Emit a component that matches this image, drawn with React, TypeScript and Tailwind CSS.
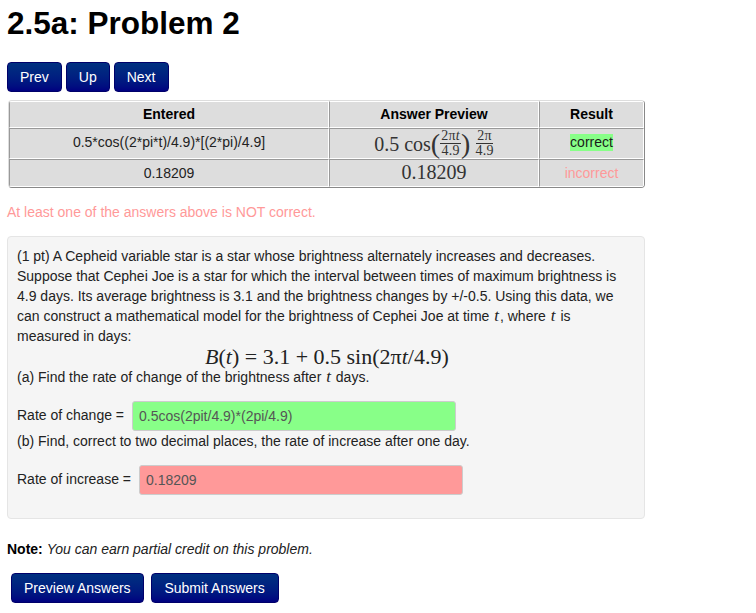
const sans = "font-['Liberation_Sans',Arial,sans-serif]";

function NavBtn({ label }: { label: string }) {
  return (
    <a className="flex h-[30px] items-center justify-center rounded-[4px] border border-[#00006a] bg-gradient-to-b from-[#003080] to-[#000080] px-3 text-[14px] text-white">
      {label}
    </a>
  );
}

function ActBtn({ label, wide }: { label: string; wide?: boolean }) {
  return (
    <button className={(wide ? "w-[128px] " : "px-3 ") + "flex h-[30px] items-center justify-center rounded-[4px] border border-[#00006a] bg-gradient-to-b from-[#003080] to-[#000080] text-[14px] text-white"}>
      {label}
    </button>
  );
}

function M({ children, className = "" }: { children: React.ReactNode; className?: string }) {
  return <span className={"font-['Liberation_Serif',serif] " + className}>{children}</span>;
}

function T() {
  return <M className="mx-[1px] inline-block h-[14px] align-baseline text-[17px] italic leading-[14px]">t</M>;
}

function Frac({ n, d }: { n: React.ReactNode; d: React.ReactNode }) {
  return (
    <span className="inline-flex flex-col items-center align-middle text-[14px] leading-[14px] tracking-[0.3px]">
      <span className="border-b border-[#333] px-[1px]">{n}</span>
      <span>{d}</span>
    </span>
  );
}

const th = "border-t border-l border-r border-b border-t-white border-l-[#999] border-r-white border-b-white bg-[#ddd] p-0 pb-[2px] text-center font-bold text-black";
const td = "border-t border-l border-r border-b border-t-[#999] border-l-[#999] border-r-white border-b-white bg-[#ddd] p-0 text-center";

export default function App() {
  return (
    <div className={sans + " h-[613px] w-[756px] overflow-hidden bg-white text-[14px] leading-[20px] text-[#222]"}>
      <h2 className="pl-[7px] pt-[6px] text-[31.5px] font-bold leading-[35px] text-black">2.5a: Problem 2</h2>
      <div className="ml-[7px] mt-[21px] flex gap-[4px]">
        <NavBtn label="Prev" />
        <NavBtn label="Up" />
        <NavBtn label="Next" />
      </div>
      <div className="ml-[8px] mt-[8px] w-[637px] overflow-hidden rounded-[4px] border border-b-[#888] border-l-[#ddd] border-r-[#888] border-t-[#ddd]">
        <table className="w-full table-fixed border-separate border-spacing-0">
          <colgroup>
            <col className="w-[320px]" />
            <col className="w-[210px]" />
            <col />
          </colgroup>
          <tbody>
            <tr className="h-[27px]">
              <th className={th}>Entered</th>
              <th className={th}>Answer Preview</th>
              <th className={th}>Result</th>
            </tr>
            <tr className="h-[31px]">
              <td className={td + " pb-[4px]"}>0.5*cos((2*pi*t)/4.9)*[(2*pi)/4.9]</td>
              <td className={td}>
                <M className="inline-flex h-[29px] items-center text-[20px] leading-[20px] text-[#333]">
                  0.5&nbsp;cos
                  <span className="text-[28px] font-light leading-[28px]">(</span>
                  <Frac n={<>2π<i>t</i></>} d="4.9" />
                  <span className="text-[28px] font-light leading-[28px]">)</span>
                  <span className="w-[5px]" />
                  <Frac n="2π" d="4.9" />
                </M>
              </td>
              <td className={td + " pb-[4px]"}>
                <span className="inline-block bg-[#8f8] leading-[17px] text-[#1a1a1a]">correct</span>
              </td>
            </tr>
            <tr className="h-[28px]">
              <td className={td}>0.18209</td>
              <td className={td}>
                <M className="text-[20px] leading-[20px] text-[#333]">0.18209</M>
              </td>
              <td className={td + " text-[#f99]"}>incorrect</td>
            </tr>
          </tbody>
        </table>
      </div>
      <p className="ml-[7px] mt-[14px] text-[#f99]">At least one of the answers above is NOT correct.</p>
      <div className="ml-[7px] mt-[14px] h-[283px] w-[638px] rounded-[4px] border border-[#e5e5e5] bg-[#f5f5f5] pl-[9px] pt-[9px]">
        <p className="w-[610px]">
          (1 pt) A Cepheid variable star is a star whose brightness alternately increases and decreases. Suppose that Cephei Joe is a star for which the interval between times of maximum brightness is 4.9 days. Its average brightness is 3.1 and the brightness changes by +/-0.5. Using this data, we can construct a mathematical model for the brightness of Cephei Joe at time <T />, where <T /> is measured in days:
        </p>
        <div className="h-[21px] pl-[188px] leading-[21px]">
          <M className="text-[22px] text-[#222]">
            <i>B</i>(<i>t</i>) = 3.1 + 0.5 sin(2π<i>t</i>/4.9)
          </M>
        </div>
        <p>
          (a) Find the rate of change of the brightness after <T /> days.
        </p>
        <div className="mt-[14px] flex h-[30px] items-center gap-[8px]">
          <span className="pb-[2px]">Rate of change =</span>
          <div className="flex h-[30px] w-[324px] items-center rounded-[3px] border border-[#ccc] bg-[#8f8] pl-[6px] text-[#555]">
            0.5cos(2pit/4.9)*(2pi/4.9)
          </div>
        </div>
        <p>(b) Find, correct to two decimal places, the rate of increase after one day.</p>
        <div className="mt-[14px] flex h-[30px] items-center gap-[8px]">
          <span className="pb-[2px]">Rate of increase =</span>
          <div className="flex h-[30px] w-[324px] items-center rounded-[3px] border border-[#ccc] bg-[#f99] pl-[6px] text-[#555]">
            0.18209
          </div>
        </div>
      </div>
      <p className="ml-[7px] mt-[20px] text-[#222]">
        <b className="text-black">Note:</b> <i>You can earn partial credit on this problem.</i>
      </p>
      <div className="ml-[11px] mt-[14px] flex gap-[7px]">
        <ActBtn label="Preview Answers" />
        <ActBtn label="Submit Answers" wide />
      </div>
    </div>
  );
}
